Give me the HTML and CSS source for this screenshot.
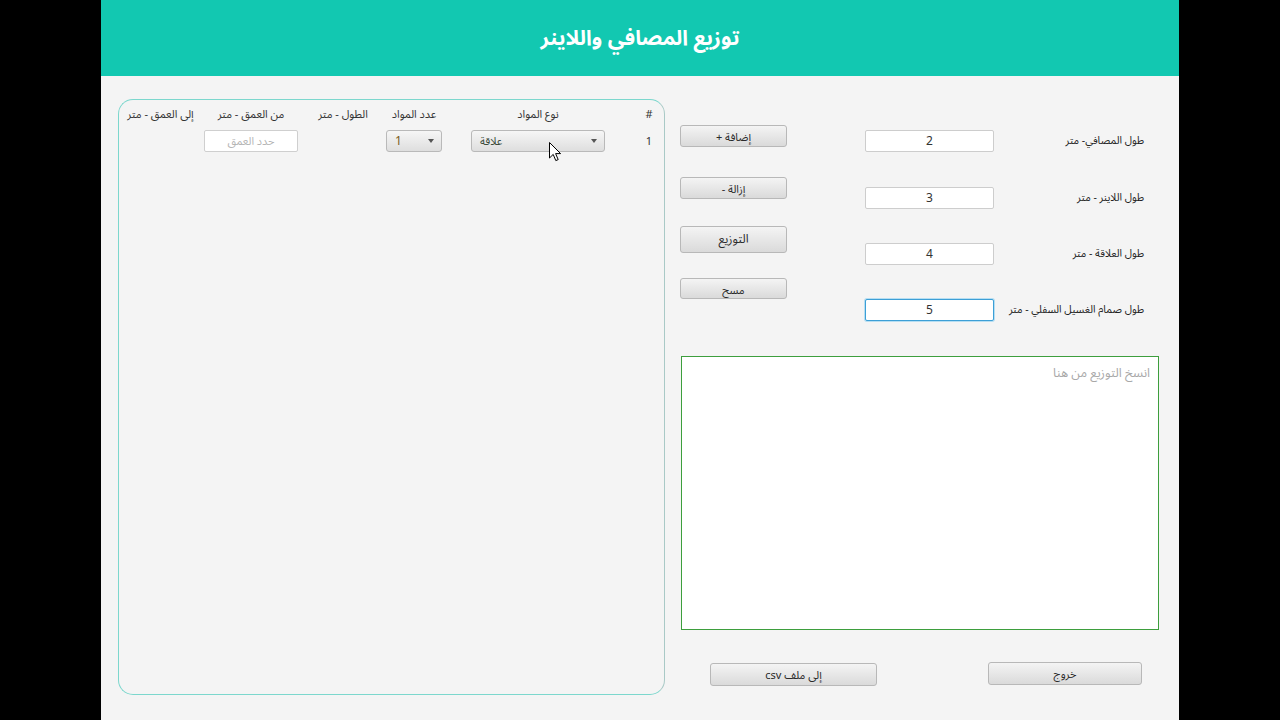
FILE: index.html
```html
<!DOCTYPE html>
<html lang="ar">
<head>
<meta charset="utf-8">
<title>توزيع المصافي واللاينر</title>
<link rel="stylesheet" href="styles.css">
</head>
<body>
<div class="app">
  <header class="header"><h1 class="title" dir="rtl">توزيع المصافي واللاينر</h1></header>
  <main class="main">
    <section class="panel">
      <div class="grid" dir="rtl">
        <div class="th">#</div>
        <div class="th">نوع المواد</div>
        <div class="th">عدد المواد</div>
        <div class="th">الطول - متر</div>
        <div class="th">من العمق - متر</div>
        <div class="th">إلى العمق - متر</div>

        <div class="td num">1</div>
        <div class="td"><div class="combo combo-wide" dir="ltr"><span class="combo-text type-text" dir="rtl">علاقة</span><span class="arrow"></span></div></div>
        <div class="td"><div class="combo combo-small" dir="ltr"><span class="combo-text count-text">1</span><span class="arrow"></span></div></div>
        <div class="td"></div>
        <div class="td"><input class="depth" type="text" placeholder="حدد العمق" dir="rtl"></div>
        <div class="td"></div>
      </div>
    </section>
    <section class="right">
      <div class="top">
        <div class="btncol">
          <button class="btn btn-add" dir="rtl">إضافة +</button>
          <button class="btn btn-remove" dir="rtl">إزالة -</button>
          <button class="btn btn-dist" dir="rtl">التوزيع</button>
          <button class="btn btn-clear" dir="rtl">مسح</button>
        </div>
        <div class="fields">
          <div class="field f1"><input class="val" type="text" value="2"><label class="lbl" dir="rtl">طول المصافي- متر</label></div>
          <div class="field f2"><input class="val" type="text" value="3"><label class="lbl" dir="rtl">طول اللاينر - متر</label></div>
          <div class="field f3"><input class="val" type="text" value="4"><label class="lbl" dir="rtl">طول العلاقة - متر</label></div>
          <div class="field f4"><input class="val focused" type="text" value="5"><label class="lbl" dir="rtl">طول صمام الغسيل السفلي - متر</label></div>
        </div>
      </div>
      <textarea class="output" dir="rtl" placeholder="انسخ التوزيع من هنا"></textarea>
      <div class="bottom">
        <button class="btn btn-csv" dir="rtl">إلى ملف csv</button>
        <button class="btn btn-exit" dir="rtl">خروج</button>
      </div>
    </section>
  </main>
  <svg class="cursor" width="13" height="20" viewBox="0 0 13 20"><path d="M0.5 0.5 L0.5 16 L4.2 12.4 L6.8 18.6 L9.2 17.6 L6.6 11.6 L11.6 11.6 Z" fill="#fff" stroke="#000" stroke-width="1" stroke-linejoin="round"/></svg>
</div>
</body>
</html>
```
FILE: styles.css
```css
html, body {
  margin: 0;
  padding: 0;
  background: #000;
  height: 720px;
  overflow: hidden;
}
.app {
  position: relative;
  width: 1078px;
  height: 720px;
  margin: 0 auto;
  background: #f4f4f4;
  font-family: "Noto Sans Arabic", "DejaVu Sans", "Noto Sans", sans-serif;
  color: #333;
}
.header {
  height: 76px;
  background: #12c8b1;
  display: flex;
  align-items: center;
  justify-content: center;
}
.title {
  margin: 0;
  color: #fff;
  font-size: 21px;
  font-weight: bold;
}
.main {
  display: flex;
  height: 644px;
}
.panel {
  box-sizing: border-box;
  width: 547px;
  height: 596px;
  margin: 23px 0 0 17px;
  border: 1.5px solid #7cd7cd;
  border-right-color: #a9c9c6;
  border-radius: 15px;
}
.grid {
  display: grid;
  grid-template-columns: 30px 192px 56px 86px 98px 1fr;
  grid-template-rows: 16px 22px;
  row-gap: 8px;
  padding-top: 6px;
  justify-items: center;
  align-items: center;
}
.th {
  font-size: 11px;
  color: #333;
  white-space: nowrap;
}
.td {
  font-size: 11px;
  width: 100%;
  height: 22px;
  display: flex;
  justify-content: center;
  align-items: center;
}
.num { color: #333; }
.combo {
  box-sizing: border-box;
  height: 22px;
  border: 1px solid #b9b9b9;
  border-radius: 3px;
  background: linear-gradient(#f6f6f6, #dedede);
  display: flex;
  align-items: center;
  justify-content: space-between;
  padding: 0 7px 0 8px;
  font-size: 11px;
}
.combo-wide { width: 134px; }
.combo-small { width: 56px; }
.type-text { color: #3a4a3a; }
.count-text { color: #7a5c1c; font-size: 12px; }
.arrow {
  width: 0;
  height: 0;
  border-left: 3.5px solid transparent;
  border-right: 3.5px solid transparent;
  border-top: 4px solid #555;
}
.depth {
  box-sizing: border-box;
  width: 94px;
  height: 22px;
  border: 1px solid #cfcfcf;
  border-radius: 2px;
  background: #fff;
  text-align: center;
  font-family: inherit;
  font-size: 11px;
  padding: 0;
}
.depth::placeholder { color: #b5b5b5; }
.right {
  flex: 1;
  display: flex;
  flex-direction: column;
}
.top {
  display: flex;
  padding-top: 49px;
}
.btncol {
  display: flex;
  flex-direction: column;
  width: 107px;
  margin-left: 15px;
}
.btn {
  box-sizing: border-box;
  height: 22px;
  border: 1px solid #b8b8b8;
  border-radius: 3px;
  background: linear-gradient(#f4f4f4, #dadada);
  font-family: inherit;
  font-size: 11px;
  color: #2a2a2a;
  padding: 0;
  cursor: default;
}
.btn-remove { margin-top: 30px; }
.btn-dist { margin-top: 27px; height: 27px; font-size: 12px; }
.btn-clear { margin-top: 25px; height: 21px; }
.fields {
  display: flex;
  flex-direction: column;
  margin-left: 78px;
}
.field {
  display: flex;
  align-items: center;
  height: 22px;
}
.f1 { margin-top: 5px; }
.f2 { margin-top: 35px; }
.f3 { margin-top: 34px; }
.f4 { margin-top: 34px; }
.val {
  box-sizing: border-box;
  width: 129px;
  height: 22px;
  border: 1px solid #cdcdcd;
  border-radius: 2px;
  background: #fff;
  text-align: center;
  font-family: inherit;
  font-size: 12px;
  color: #333;
  padding: 0;
}
.val.focused {
  border: 1px solid #3c9fd6;
  box-shadow: 0 0 0 1px #b6def2;
}
.lbl {
  width: 150px;
  text-align: right;
  font-size: 10.5px;
  color: #222;
  white-space: nowrap;
}
.output {
  box-sizing: border-box;
  display: block;
  width: 478px;
  height: 274px;
  margin: 35px 0 0 16px;
  border: 1.5px solid #3d9e3d;
  background: #fff;
  resize: none;
  font-family: inherit;
  font-size: 12.5px;
  padding: 3px 8px;
  outline: none;
}
.output::placeholder { color: #a8a8a8; }
.bottom {
  display: flex;
  margin-top: 33px;
  padding-left: 45px;
}
.btn-csv { width: 167px; height: 23px; }
.btn-exit { width: 154px; height: 23px; margin-left: 111px; margin-top: -1px; }
.cursor {
  position: absolute;
  left: 448px;
  top: 142px;
}
```
